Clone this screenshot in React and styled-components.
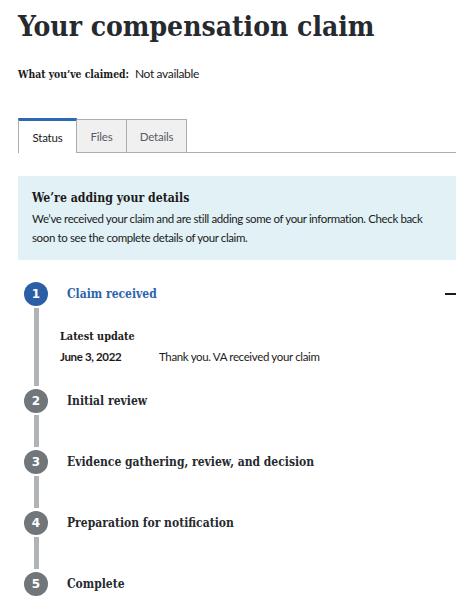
import styled, { createGlobalStyle } from "styled-components";

const GlobalStyle = createGlobalStyle`
  body {
    margin: 0;
    background: #ffffff;
    color: #1b1b1b;
    font-family: "Lato", "Noto Sans", sans-serif;
  }
`;

const serif = `"DejaVu Serif Condensed", "DejaVu Serif", "Liberation Serif", serif`;

const Page = styled.div`
  padding: 0 18px;
  width: 438px;
`;

const Title = styled.h1`
  font-family: ${serif};
  font-stretch: condensed;
  font-weight: 700;
  font-size: 28px;
  line-height: 34px;
  color: #262a2f;
  margin: 10px 0 0;
`;

const Claimed = styled.div`
  margin-top: 21px;
  font-size: 12px;
  letter-spacing: -0.35px;
  line-height: 18px;
  display: flex;
  gap: 6px;
`;

const ClaimedLabel = styled.span`
  font-family: ${serif};
  font-stretch: condensed;
  font-weight: 700;
  font-size: 10.3px;
  letter-spacing: 0;
`;

const Tabs = styled.div`
  margin-top: 35px;
  display: flex;
  align-items: flex-end;
  border-bottom: 1px solid #a9aeb1;
`;

const Tab = styled.div`
  box-sizing: border-box;
  width: ${(p) => p.$w}px;
  height: ${(p) => (p.$active ? 35 : 33)}px;
  display: flex;
  align-items: center;
  justify-content: center;
  font-size: 11.5px;
  letter-spacing: -0.2px;
  color: ${(p) => (p.$active ? "#1b1b1b" : "#565c65")};
  background: ${(p) => (p.$active ? "#ffffff" : "#f0f0f0")};
  border: 1px solid #a9aeb1;
  border-top: ${(p) => (p.$active ? "3px solid #2a6ab2" : "1px solid #a9aeb1")};
  border-bottom: none;
  border-left: ${(p) => (p.$first ? "1px solid #a9aeb1" : "none")};
  margin-bottom: ${(p) => (p.$active ? -1 : 0)}px;
`;

const Alert = styled.div`
  margin-top: 23px;
  background: #e1f1f6;
  padding: 12px 14px 13px;
`;

const AlertHeading = styled.h3`
  font-family: ${serif};
  font-stretch: condensed;
  font-weight: 700;
  font-size: 12.2px;
  line-height: 20px;
  color: #1b1b1b;
  margin: 0 0 1px;
`;

const AlertText = styled.p`
  margin: 0;
  font-size: 11.5px;
  letter-spacing: -0.38px;
  line-height: 19px;
  color: #1b1b1b;
`;

const Timeline = styled.div`
  margin-top: 22px;
  display: flex;
  flex-direction: column;
`;

const Step = styled.div`
  display: grid;
  grid-template-columns: 24px 1fr;
  column-gap: 19px;
  padding-left: 6px;
`;

const Marker = styled.div`
  display: flex;
  flex-direction: column;
  align-items: center;
`;

const Circle = styled.div`
  width: 24px;
  height: 24px;
  border-radius: 50%;
  background: ${(p) => (p.$current ? "#2a5fa8" : "#71767a")};
  color: #ffffff;
  font-family: "DejaVu Sans", sans-serif;
  font-weight: 700;
  font-size: 12px;
  display: flex;
  align-items: center;
  justify-content: center;
  flex-shrink: 0;
`;

const Connector = styled.div`
  flex: 1;
  width: 5px;
  background: #b1b4b7;
  margin: 2px 0 3px;
`;

const StepBody = styled.div`
  padding-bottom: ${(p) => (p.$last ? 0 : p.$open ? 22 : 37)}px;
`;

const StepHeader = styled.div`
  height: 24px;
  display: flex;
  align-items: center;
  justify-content: space-between;
`;

const StepTitle = styled.span`
  font-family: ${serif};
  font-stretch: condensed;
  font-weight: 700;
  font-size: 12px;
  color: ${(p) => (p.$current ? "#2a64ad" : "#262a2f")};
`;

const Minus = styled.span`
  width: 11px;
  height: 2px;
  background: #1b1b1b;
`;

const Update = styled.div`
  margin-top: 21px;
  margin-left: -7px;
`;

const UpdateLabel = styled.div`
  font-family: ${serif};
  font-stretch: condensed;
  font-weight: 700;
  font-size: 10.8px;
  line-height: 20px;
`;

const UpdateRow = styled.div`
  display: grid;
  grid-template-columns: 99px 1fr;
  font-size: 11.5px;
  letter-spacing: -0.35px;
  line-height: 20px;
`;

const UpdateDate = styled.span`
  font-weight: 700;
`;

const steps = [
  "Claim received",
  "Initial review",
  "Evidence gathering, review, and decision",
  "Preparation for notification",
  "Complete",
];

export default function App() {
  return (
    <Page>
      <GlobalStyle />
      <Title>Your compensation claim</Title>
      <Claimed>
        <ClaimedLabel>What you’ve claimed:</ClaimedLabel>
        <span>Not available</span>
      </Claimed>
      <Tabs>
        <Tab $w={59} $active $first>
          Status
        </Tab>
        <Tab $w={50}>Files</Tab>
        <Tab $w={60}>Details</Tab>
      </Tabs>
      <Alert>
        <AlertHeading>We’re adding your details</AlertHeading>
        <AlertText>
          We’ve received your claim and are still adding some of your
          information. Check back soon to see the complete details of your
          claim.
        </AlertText>
      </Alert>
      <Timeline>
        {steps.map((title, i) => {
          const current = i === 0;
          const last = i === steps.length - 1;
          return (
            <Step key={title}>
              <Marker>
                <Circle $current={current}>{i + 1}</Circle>
                {!last && <Connector />}
              </Marker>
              <StepBody $last={last} $open={current}>
                <StepHeader>
                  <StepTitle $current={current}>{title}</StepTitle>
                  {current && <Minus />}
                </StepHeader>
                {current && (
                  <Update>
                    <UpdateLabel>Latest update</UpdateLabel>
                    <UpdateRow>
                      <UpdateDate>June 3, 2022</UpdateDate>
                      <span>Thank you. VA received your claim</span>
                    </UpdateRow>
                  </Update>
                )}
              </StepBody>
            </Step>
          );
        })}
      </Timeline>
    </Page>
  );
}
